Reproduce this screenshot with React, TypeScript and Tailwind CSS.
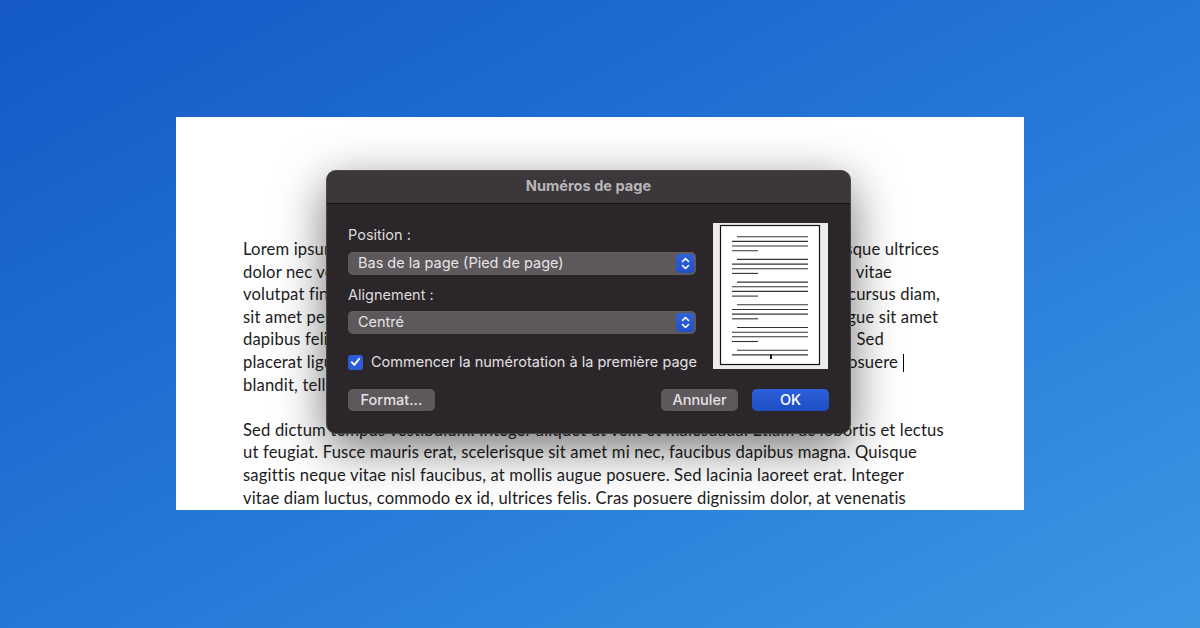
import React from 'react'

interface SplitLine {
  left: string;
  right: string;
  width: string;
}

// first paragraph: the middle of each line sits under the dialog
const firstParagraph: SplitLine[] = [
  { left: 'Lorem ipsum dolor sit amet, consectetur adipiscing elit. Nam', right: 'Quisque ultrices', width: 'w-[696px]' },
  { left: 'dolor nec vehicula accumsan, nisi lectus pulvinar erat, at', right: 'eu vitae', width: 'w-[649px]' },
  { left: 'volutpat finibus lectus ante vel nunc. Pellentesque', right: 'at cursus diam,', width: 'w-[697px]' },
  { left: 'sit amet pellentesque mauris vulputate at. Nunc', right: 'augue sit amet', width: 'w-[695px]' },
  { left: 'dapibus felis, sit amet maximus leo. Ut vel libero', right: 'metus. Sed', width: 'w-[641px]' },
  { left: 'placerat ligula in nibh rutrum, vel rhoncus sem', right: 'posuere', width: 'w-[655px]' },
  { left: 'blandit, tellus quis tincidunt commodo, nisi erat', right: '', width: 'w-[560px]' },
]

const secondParagraph = [
  'Sed dictum tempus vestibulum. Integer aliquet ut velit et malesuada. Etiam ac lobortis et lectus',
  'ut feugiat. Fusce mauris erat, scelerisque sit amet mi nec, faucibus dapibus magna. Quisque',
  'sagittis neque vitae nisl faucibus, at mollis augue posuere. Sed lacinia laoreet erat. Integer',
  'vitae diam luctus, commodo ex id, ultrices felis. Cras posuere dignissim dolor, at venenatis',
]

function Stepper() {
  return (
    <span className="w-[18px] h-[19px] rounded-[4px] bg-gradient-to-b from-[#2f62dc] to-[#2150c6] flex items-center justify-center">
      <svg width="9" height="13" viewBox="0 0 9 13" fill="none" stroke="#ffffff" strokeWidth="1.6" strokeLinecap="round" strokeLinejoin="round">
        <path d="M1.5 4.5 L4.5 1.5 L7.5 4.5" />
        <path d="M1.5 8.5 L4.5 11.5 L7.5 8.5" />
      </svg>
    </span>
  )
}

function PopupSelect({ value }: { value: string }) {
  return (
    <div className="h-[23px] w-[348px] rounded-[5px] bg-[#5d585b] flex items-center justify-between pl-[10px] pr-[2px] shadow-[0_0.5px_0_rgba(255,255,255,0.08)_inset]">
      <span className="text-[14.5px] text-[#e6e4e5] leading-none">{value}</span>
      <Stepper />
    </div>
  )
}

function PagePreview() {
  const groups = [13.7, 36.4, 59.1, 81.8, 104.5]
  return (
    <svg width="115" height="146" viewBox="0 0 115 146" className="block">
      <rect x="0" y="0" width="115" height="146" fill="#ececec" />
      <rect x="7.5" y="2.5" width="99" height="139" fill="#ffffff" stroke="#111111" strokeWidth="1.2" />
      <g stroke="#333333" strokeWidth="1.1">
        {groups.map((y) => (
          <g key={y}>
            <line x1="24" y1={y} x2="95" y2={y} />
            <line x1="19" y1={y + 4.7} x2="95" y2={y + 4.7} />
            <line x1="19" y1={y + 9.3} x2="95" y2={y + 9.3} />
            <line x1="19" y1={y + 14} x2="45" y2={y + 14} />
          </g>
        ))}
        <line x1="24" y1="127.2" x2="95" y2="127.2" />
        <line x1="19" y1="131.9" x2="95" y2="131.9" />
      </g>
      <rect x="57" y="131.5" width="2" height="4.5" fill="#111111" />
    </svg>
  )
}

export default function App() {
  return (
    <div className="w-[1200px] h-[628px] overflow-hidden bg-gradient-to-br from-[#1459c5] via-[#2576d6] to-[#3c98e5] pt-[117px] pl-[176px]">
      <div className="relative w-[848px] h-[393px] bg-white overflow-hidden">
        {/* document body */}
        <div className="pt-[121px] pl-[67px] font-['Lato','Liberation_Sans',sans-serif] text-[16.6px] tracking-[0.16px] leading-[22.6px] text-[#1c1c1c]">
          {firstParagraph.map((line, i) => (
            <div key={i} className={`${line.width} flex justify-between whitespace-nowrap`}>
              <span className="min-w-0 overflow-hidden">{line.left}</span>
              <span className="relative shrink-0">
                {line.right}
                {i === 5 && <span className="absolute right-[-6px] top-[3px] w-px h-[18px] bg-black" />}
              </span>
            </div>
          ))}
          <div className="h-[22.6px]" />
          {secondParagraph.map((text, i) => (
            <div key={i} className="whitespace-nowrap">{text}</div>
          ))}
        </div>

        {/* Numéros de page dialog */}
        <div className="absolute left-[150px] top-[53px] w-[525px] h-[264px] rounded-[10px] bg-[#2b262a] border border-[#4b474a] shadow-[0_14px_48px_rgba(0,0,0,0.55)] overflow-hidden font-['Inter','Liberation_Sans',sans-serif]">
          <div className="h-[33px] bg-[#3b373a] border-b border-[#121012] flex items-center justify-center text-[14.6px] font-bold text-[#b9b6b8]">
            Numéros de page
          </div>
          <div className="flex pl-[21px]">
            <div className="w-[348px] pt-[23px]">
              <div className="text-[14.5px] leading-[16px] text-[#dcdadb]">Position :</div>
              <div className="mt-[9px]">
                <PopupSelect value="Bas de la page (Pied de page)" />
              </div>
              <div className="mt-[12px] text-[14.5px] leading-[16px] text-[#dcdadb]">Alignement :</div>
              <div className="mt-[8px]">
                <PopupSelect value="Centré" />
              </div>
              <label className="mt-[20px] flex items-center gap-[8px] whitespace-nowrap">
                <span className="w-[15px] h-[15px] rounded-[3px] bg-[#2c5cd8] flex items-center justify-center shrink-0">
                  <svg width="11" height="10" viewBox="0 0 11 10" fill="none" stroke="#ffffff" strokeWidth="1.9" strokeLinecap="round" strokeLinejoin="round">
                    <path d="M1.8 5.2 L4.3 7.8 L9.2 1.8" />
                  </svg>
                </span>
                <span className="text-[14.5px] leading-[16px] text-[#e2e0e1]">Commencer la numérotation à la première page</span>
              </label>
            </div>
            <div className="ml-[17px] mt-[19px]">
              <PagePreview />
            </div>
          </div>
          <div className="mt-[19px] pl-[21px] pr-[21px] flex items-center">
            <button className="w-[87px] h-[22px] rounded-[5px] bg-[#5d585b] text-[14.5px] font-medium text-[#e4e2e3]">Format...</button>
            <div className="flex-1" />
            <button className="w-[77px] h-[22px] rounded-[5px] bg-[#5d585b] text-[14.5px] font-medium text-[#e4e2e3]">Annuler</button>
            <button className="ml-[14px] w-[77px] h-[22px] rounded-[5px] bg-gradient-to-b from-[#2c5fda] to-[#1f4ec4] text-[14.5px] font-medium text-white">OK</button>
          </div>
        </div>
      </div>
    </div>
  )
}
